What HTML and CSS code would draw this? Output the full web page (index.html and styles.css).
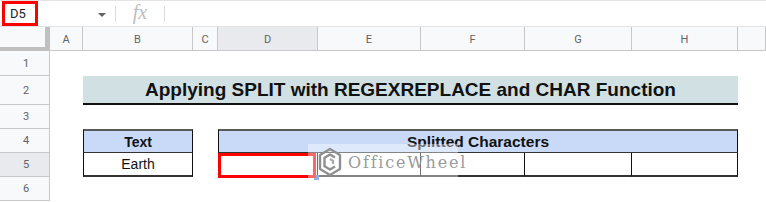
FILE: index.html
```html
<!DOCTYPE html>
<html>
<head>
<meta charset="utf-8">
<link rel="stylesheet" href="styles.css">
</head>
<body>
<div class="fbar">
  <div class="namebox"><span class="ref">D5</span></div>
  <div class="caret"></div>
  <div class="sep"></div>
  <div class="fx">fx</div>
  <div class="sep"></div>
</div>
<div class="sheet">
  <div class="corner"></div>
  <div class="ch">A</div><div class="ch">B</div><div class="ch">C</div><div class="ch sel">D</div><div class="ch">E</div><div class="ch">F</div><div class="ch">G</div><div class="ch">H</div><div class="ch"></div>

  <div class="rh r1">1</div>
  <div class="rh r2">2</div>
  <div class="rh r3">3</div>
  <div class="rh r4">4</div>
  <div class="rh r5 sel">5</div>
  <div class="rh r6">6</div>

  <div class="title">Applying SPLIT with REGEXREPLACE and CHAR Function</div>

  <div class="th text-h">Text</div>
  <div class="td text-d">Earth</div>

  <div class="th split-h">Splitted Characters</div>
  <div class="td c-d"></div>
  <div class="td c-e"></div>
  <div class="td c-f"></div>
  <div class="td c-g"></div>
  <div class="td c-h"></div>

  <div class="active"></div>
  <div class="handle"></div>

  <div class="wm">
    <svg class="wm-logo" width="24" height="30" viewBox="0 0 24 30">
      <path d="M12 2 L22 8 L22 22 L12 28 L2 22 L2 8 Z" fill="none" stroke="#8f8f8f" stroke-width="2.4" stroke-linejoin="round"/>
      <path d="M17 10.5 L12 7.5 L6.5 10.7 L6.5 19.3 L12 22.5 L17 19.5" fill="none" stroke="#8f8f8f" stroke-width="2.4" stroke-linejoin="round"/>
      <path d="M12 12 L15 13.8 L15 17" fill="none" stroke="#a8a8a8" stroke-width="2.2"/>
    </svg>
    <span class="wm-text">OfficeWheel</span>
  </div>
</div>
</body>
</html>
```

FILE: styles.css
```css
* { box-sizing: border-box; }
body {
  margin: 0;
  width: 766px;
  height: 202px;
  overflow: hidden;
  background: #fff;
  font-family: "Liberation Sans", Arial, sans-serif;
}
.fbar {
  height: 27px;
  display: flex;
  align-items: center;
  border-top: 1px solid #e3e3e3;
  border-bottom: 1px solid #e3e3e3;
}
.namebox {
  width: 96px;
  height: 25px;
  padding-left: 2px;
  display: flex;
  align-items: center;
}
.ref {
  display: flex;
  align-items: center;
  width: 36px;
  height: 25px;
  border: 3px solid #ff0000;
  padding-left: 5px;
  font-family: Roboto, "Liberation Sans", sans-serif;
  font-size: 13px;
  color: #202124;
}
.caret {
  width: 0; height: 0;
  border-left: 4px solid transparent;
  border-right: 4px solid transparent;
  border-top: 4px solid #5f6368;
  margin: 2px 9px 0 2px;
}
.sep {
  width: 1px;
  height: 16px;
  background: #dadce0;
}
.fx {
  width: 48px;
  text-align: center;
  font-family: "Liberation Serif", serif;
  font-style: italic;
  font-size: 20px;
  color: #bdbdbd;
  padding-bottom: 3px;
}
.sheet {
  position: relative;
  display: grid;
  grid-template-columns: 50px 33px 110px 25px 100px 103px 104px 107px 106px 28px;
  grid-template-rows: 24px 25px 29px 24px 24px 24px 24px;
}
.corner {
  background: #f8f9fa;
  border-right: 5px solid #c0c0c0;
  border-bottom: 4px solid #c0c0c0;
}
.ch {
  background: #f8f9fa;
  border-right: 1px solid #c7c7c7;
  border-bottom: 1px solid #c7c7c7;
  font-family: Roboto, sans-serif;
  font-size: 11px;
  color: #5f6368;
  display: flex;
  align-items: center;
  justify-content: center;
  padding-top: 1px;
}
.ch.sel { background: #e8eaed; }
.rh {
  grid-column: 1;
  background: #f8f9fa;
  border-right: 1px solid #c7c7c7;
  border-bottom: 1px solid #c7c7c7;
  font-family: Roboto, sans-serif;
  font-size: 11px;
  color: #5f6368;
  display: flex;
  align-items: center;
  justify-content: center;
  padding-left: 3px;
}
.rh.sel { background: #e8eaed; }
.r1 { grid-row: 2; }
.r2 { grid-row: 3; }
.r3 { grid-row: 4; }
.r4 { grid-row: 5; }
.r5 { grid-row: 6; }
.r6 { grid-row: 7; }

.title {
  grid-column: 3 / 10;
  grid-row: 3;
  background: #d0e0e3;
  border-bottom: 2px solid #111;
  display: flex;
  align-items: center;
  justify-content: center;
  font-weight: bold;
  font-size: 19px;
  color: #111;
  padding-top: 1px;
}
.th {
  background: #c9daf8;
  border: 1px solid #111;
  border-top: 2px solid #5a5a5a;
  display: flex;
  align-items: center;
  justify-content: center;
  font-weight: bold;
  font-size: 14px;
  color: #111;
}
.td {
  border-right: 1px solid #111;
  border-bottom: 2px solid #333;
  display: flex;
  align-items: center;
  justify-content: center;
  font-size: 14px;
  color: #111;
}
.text-h { grid-column: 3; grid-row: 5; border-bottom: 1px solid #333; }
.text-d { grid-column: 3; grid-row: 6; border-left: 1px solid #111; border-bottom: 2px solid #333; }
.split-h { grid-column: 5 / 10; grid-row: 5; border-bottom: 1px solid #333; font-size: 15.5px; padding-top: 1px; }
.c-d { grid-column: 5; grid-row: 6; border-left: 1px solid #111; }
.c-e { grid-column: 6; grid-row: 6; }
.c-f { grid-column: 7; grid-row: 6; }
.c-g { grid-column: 8; grid-row: 6; }
.c-h { grid-column: 9; grid-row: 6; }

.active {
  grid-column: 5;
  grid-row: 6;
  margin-right: 2px;
  margin-bottom: -1px;
  border: 3px solid #ff0000;
  z-index: 2;
}
.handle {
  position: absolute;
  left: 314px;
  top: 148px;
  width: 5px;
  height: 5px;
  background: #4a7fd8;
  z-index: 1;
}
.wm {
  position: absolute;
  left: 308px;
  top: 117px;
  width: 150px;
  height: 36px;
  background: rgba(255, 255, 255, 0.4);
  display: flex;
  align-items: center;
  gap: 6px;
  padding-left: 10px;
  z-index: 3;
}
.wm-logo { flex: none; }
.wm-text {
  font-family: "DejaVu Serif", "Liberation Serif", serif;
  font-size: 16px;
  letter-spacing: 1.8px;
  color: #9a9a9a;
}
```
